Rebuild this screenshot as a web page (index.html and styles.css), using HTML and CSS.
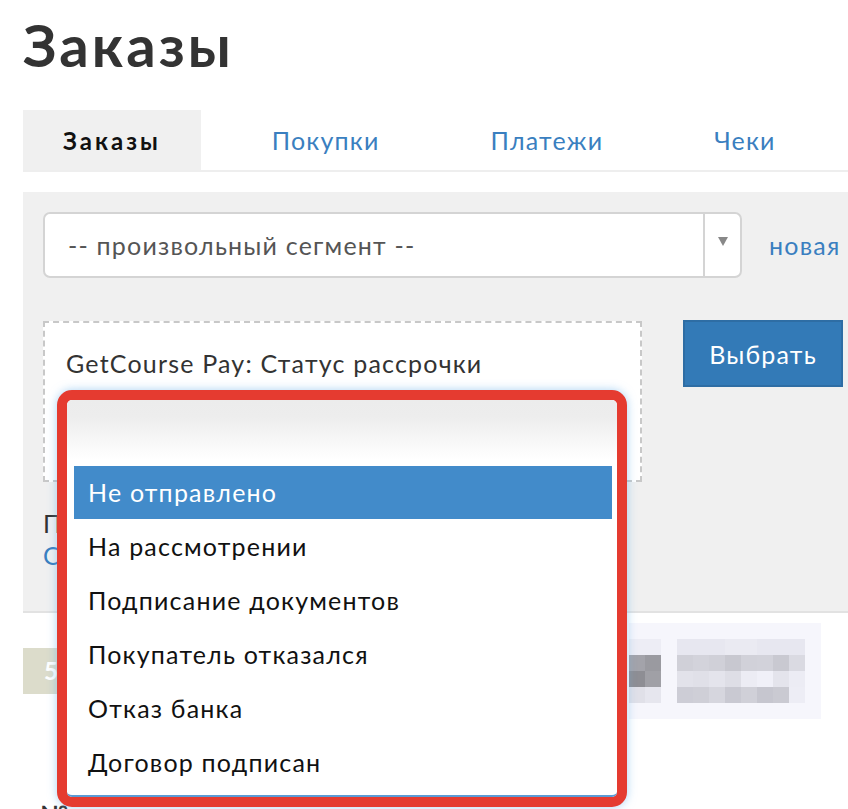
FILE: index.html
```html
<!DOCTYPE html>
<html lang="ru">
<head>
<meta charset="utf-8">
<title>Заказы</title>
<link rel="stylesheet" href="styles.css">
</head>
<body>
<div class="page">
  <h1 class="title">Заказы</h1>
  <nav class="tabs">
    <span class="tab tab-active">Заказы</span>
    <a class="tab">Покупки</a>
    <a class="tab">Платежи</a>
    <a class="tab">Чеки</a>
  </nav>
  <section class="panel">
    <div class="segment-row">
      <div class="select">
        <span class="select-text">-- произвольный сегмент --</span>
        <span class="select-arrow"></span>
      </div>
      <a class="new-link">новая выборка</a>
    </div>
    <div class="filter-row">
      <div class="filter-box">
        <div class="filter-label">GetCourse Pay: Статус рассрочки</div>
      </div>
      <button class="btn">Выбрать</button>
    </div>
    <div class="summary">Показать все заказы</div>
    <a class="clear-link">Очистить фильтр</a>
  </section>
  <div class="results">
    <span class="badge">5</span>
    <svg class="blurred" width="192" height="96" viewBox="0 0 192 96">
      <rect x="0" y="0" width="192" height="96" fill="#f6f6fc"/>
      <rect x="0" y="16" width="32" height="16" fill="#ededf5"/>
      <rect x="48" y="16" width="128" height="16" fill="#e7e7f0"/>
      <rect x="96" y="16" width="32" height="16" fill="#eaeaf2"/>
      <rect x="0" y="32" width="16" height="16" fill="#a3a3aa"/>
      <rect x="16" y="32" width="16" height="16" fill="#9a9aa0"/>
      <rect x="48" y="32" width="16" height="16" fill="#d0d0d8"/>
      <rect x="64" y="32" width="16" height="16" fill="#d3d3db"/>
      <rect x="80" y="32" width="16" height="16" fill="#d0d0d8"/>
      <rect x="96" y="32" width="16" height="16" fill="#c8c8d0"/>
      <rect x="112" y="32" width="16" height="16" fill="#d1d1d9"/>
      <rect x="128" y="32" width="16" height="16" fill="#d2d2da"/>
      <rect x="144" y="32" width="16" height="16" fill="#c9c9d1"/>
      <rect x="160" y="32" width="16" height="16" fill="#dadae2"/>
      <rect x="0" y="48" width="16" height="16" fill="#8e8e94"/>
      <rect x="16" y="48" width="16" height="16" fill="#a0a0a6"/>
      <rect x="48" y="48" width="16" height="16" fill="#e2e2ea"/>
      <rect x="64" y="48" width="16" height="16" fill="#e0e0e8"/>
      <rect x="80" y="48" width="16" height="16" fill="#e4e4ec"/>
      <rect x="96" y="48" width="16" height="16" fill="#dedee6"/>
      <rect x="112" y="48" width="16" height="16" fill="#ececf4"/>
      <rect x="128" y="48" width="16" height="16" fill="#f0f0f8"/>
      <rect x="144" y="48" width="16" height="16" fill="#e4e4ec"/>
      <rect x="160" y="48" width="16" height="16" fill="#ececf4"/>
      <rect x="0" y="64" width="16" height="16" fill="#e0e0e8"/>
      <rect x="16" y="64" width="16" height="16" fill="#e6e6ee"/>
      <rect x="48" y="64" width="16" height="16" fill="#cdcdd6"/>
      <rect x="64" y="64" width="16" height="16" fill="#cfcfd7"/>
      <rect x="80" y="64" width="16" height="16" fill="#d6d6de"/>
      <rect x="96" y="64" width="16" height="16" fill="#c9c9d2"/>
      <rect x="112" y="64" width="16" height="16" fill="#d0d0d8"/>
      <rect x="128" y="64" width="16" height="16" fill="#c6c6cf"/>
      <rect x="144" y="64" width="16" height="16" fill="#cacad2"/>
      <rect x="160" y="64" width="16" height="16" fill="#ededf5"/>
    </svg>
  </div>
  <div class="table-head">№</div>

  <div class="dropdown">
    <div class="dropdown-inner">
      <div class="dropdown-search"></div>
      <ul class="options">
        <li class="option option-active">Не отправлено</li>
        <li class="option">На рассмотрении</li>
        <li class="option">Подписание документов</li>
        <li class="option">Покупатель отказался</li>
        <li class="option">Отказ банка</li>
        <li class="option">Договор подписан</li>
      </ul>
    </div>
  </div>
</div>
</body>
</html>
```
FILE: styles.css
```css
html, body {
  margin: 0;
  padding: 0;
  background: #ffffff;
}
body {
  font-family: Lato, "Liberation Sans", sans-serif;
  color: #333333;
  overflow: hidden;
  letter-spacing: 1.2px;
}
.page {
  position: relative;
  width: 848px;
  height: 809px;
  padding-left: 23px;
  box-sizing: border-box;
  overflow: hidden;
}
.title {
  margin: 0;
  padding-top: 13px;
  height: 110px;
  box-sizing: border-box;
  font-size: 58px;
  line-height: 64px;
  font-weight: 700;
  color: #333333;
  letter-spacing: 3px;
}
.tabs {
  display: flex;
  gap: 31px;
  height: 60px;
  border-bottom: 2px solid #eeeeee;
  white-space: nowrap;
}
.tab {
  display: flex;
  align-items: center;
  padding: 0 40px;
  height: 60px;
  font-size: 25px;
  color: #3a7fc0;
  text-decoration: none;
}
.tab-active {
  background: #f0f0f0;
  color: #111111;
  font-weight: 700;
  font-size: 24px;
  letter-spacing: 3px;
}
.panel {
  margin-top: 20px;
  background: #f0f0f0;
  padding: 20px 0 0 20px;
  height: 421px;
  box-sizing: border-box;
  border-bottom: 2px solid #e2e2e2;
  white-space: nowrap;
  overflow: hidden;
}
.segment-row {
  display: flex;
  align-items: center;
  gap: 27px;
}
.select {
  flex-shrink: 0;
  width: 699px;
  height: 66px;
  box-sizing: border-box;
  background: #ffffff;
  border: 2px solid #d4d4d4;
  border-radius: 7px;
  display: flex;
  align-items: center;
}
.select-text {
  flex: 1;
  padding-left: 23px;
  font-size: 25px;
  color: #555555;
}
.select-arrow {
  width: 35px;
  height: 100%;
  border-left: 2px solid #d4d4d4;
  display: flex;
  align-items: center;
  justify-content: center;
}
.select-arrow::before {
  content: "";
  margin-top: -8px;
  border-left: 5px solid transparent;
  border-right: 5px solid transparent;
  border-top: 9px solid #888888;
}
.new-link {
  flex-shrink: 0;
  font-size: 25px;
  color: #3a7fc0;
}
.filter-row {
  display: flex;
  align-items: flex-start;
  gap: 41px;
  margin-top: 43px;
}
.filter-box {
  flex-shrink: 0;
  width: 599px;
  height: 161px;
  box-sizing: border-box;
  background: #ffffff;
  border: 2px dashed #c8c8c8;
  padding: 24px 0 0 21px;
}
.filter-label {
  font-size: 25px;
  line-height: 32px;
  color: #333333;
}
.btn {
  flex-shrink: 0;
  width: 160px;
  height: 67px;
  margin-top: -1px;
  background: #337ab7;
  border: 2px solid #2e6da4;
  color: #ffffff;
  font-family: inherit;
  font-size: 25px;
  letter-spacing: 1.2px;
  padding: 0;
}
.summary {
  margin-top: 24px;
  font-size: 25px;
  line-height: 34px;
  color: #333333;
}
.clear-link {
  display: block;
  font-size: 25px;
  line-height: 30px;
  color: #3a7fc0;
}
.results {
  display: flex;
  align-items: flex-start;
  margin-top: 10px;
  height: 96px;
}
.badge {
  flex-shrink: 0;
  margin-top: 25px;
  width: 60px;
  height: 46px;
  background: #dcdccb;
  color: #ffffff;
  font-weight: 700;
  font-size: 24px;
  line-height: 46px;
  padding-left: 21px;
  box-sizing: border-box;
}
.blurred {
  display: block;
  flex-shrink: 0;
  margin-left: 546px;
}
.table-head {
  margin-top: 80px;
  padding-left: 17px;
  font-size: 24px;
  font-weight: 700;
  color: #333333;
}
.dropdown {
  position: absolute;
  left: 57px;
  top: 390px;
  width: 570px;
  height: 417px;
  box-sizing: border-box;
  border: 10px solid #e53b30;
  border-radius: 15px;
  background: #ffffff;
  box-shadow: 0 0 10px rgba(102, 175, 233, 0.55);
}
.dropdown-inner {
  height: 100%;
  box-sizing: border-box;
  border-radius: 5px;
  overflow: hidden;
  border-bottom: 2px solid #5b9bd5;
}
.dropdown-search {
  height: 66px;
  background: linear-gradient(to bottom, #ececec 0%, #ededed 25%, #ffffff 90%);
}
.options {
  list-style: none;
  margin: 0;
  padding: 0 5px 0 7px;
}
.option {
  height: 54px;
  line-height: 54px;
  padding-left: 14px;
  font-size: 25px;
  color: #111111;
}
.option-active {
  height: 53px;
  line-height: 52px;
  background: #428bca;
  color: #ffffff;
}
```
